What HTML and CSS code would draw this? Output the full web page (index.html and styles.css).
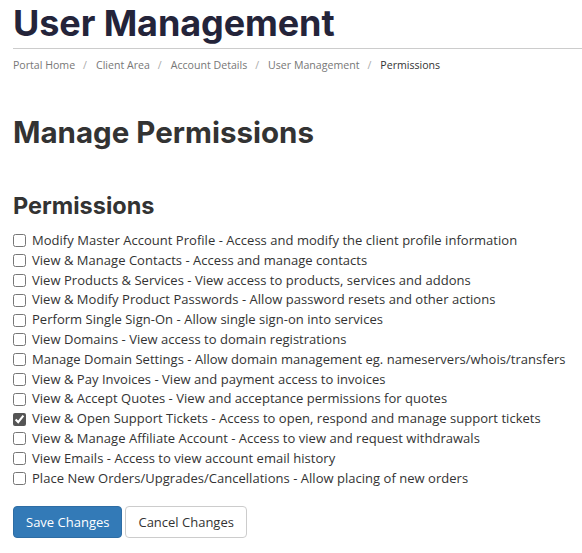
FILE: index.html
```html
<!DOCTYPE html>
<html>
<head>
<meta charset="utf-8">
<link rel="stylesheet" href="styles.css">
</head>
<body>
<div class="page">
  <h1 class="title">User Management</h1>
  <ol class="crumbs">
    <li><a href="#">Portal Home</a></li>
    <li><a href="#">Client Area</a></li>
    <li><a href="#">Account Details</a></li>
    <li><a href="#">User Management</a></li>
    <li class="active">Permissions</li>
  </ol>
  <h2 class="sub">Manage Permissions</h2>
  <h3 class="sec">Permissions</h3>
  <div class="perms">
    <label class="perm"><input type="checkbox"> Modify Master Account Profile - Access and modify the client profile information</label>
    <label class="perm"><input type="checkbox"> View &amp; Manage Contacts - Access and manage contacts</label>
    <label class="perm"><input type="checkbox"> View Products &amp; Services - View access to products, services and addons</label>
    <label class="perm"><input type="checkbox"> View &amp; Modify Product Passwords - Allow password resets and other actions</label>
    <label class="perm"><input type="checkbox"> Perform Single Sign-On - Allow single sign-on into services</label>
    <label class="perm"><input type="checkbox"> View Domains - View access to domain registrations</label>
    <label class="perm"><input type="checkbox"> Manage Domain Settings - Allow domain management eg. nameservers/whois/transfers</label>
    <label class="perm"><input type="checkbox"> View &amp; Pay Invoices - View and payment access to invoices</label>
    <label class="perm"><input type="checkbox"> View &amp; Accept Quotes - View and acceptance permissions for quotes</label>
    <label class="perm"><input type="checkbox" checked> View &amp; Open Support Tickets - Access to open, respond and manage support tickets</label>
    <label class="perm"><input type="checkbox"> View &amp; Manage Affiliate Account - Access to view and request withdrawals</label>
    <label class="perm"><input type="checkbox"> View Emails - Access to view account email history</label>
    <label class="perm"><input type="checkbox"> Place New Orders/Upgrades/Cancellations - Allow placing of new orders</label>
  </div>
  <div class="actions">
    <button class="btn btn-primary">Save Changes</button>
    <button class="btn btn-default">Cancel Changes</button>
  </div>
</div>
</body>
</html>
```
FILE: styles.css
```css
html, body {
  margin: 0;
  padding: 0;
  background: #fff;
}
body {
  font-family: "Open Sans", "Liberation Sans", sans-serif;
  font-size: 13px;
  color: #333;
  overflow: hidden;
}
.page {
  padding: 0 0 0 13px;
}
.title {
  font-family: Inter, "DejaVu Sans", sans-serif;
  font-weight: 700;
  font-size: 36px;
  line-height: 44px;
  color: #24243a;
  margin: 1px 0 0 0;
  padding-bottom: 3px;
  border-bottom: 1px solid #ccc;
  letter-spacing: -0.1px;
}
.crumbs {
  list-style: none;
  margin: 0;
  padding: 9px 0 0 0;
  display: flex;
  font-size: 10.6px;
  line-height: 15px;
}
.crumbs li {
  color: #333;
}
.crumbs li a {
  color: #777;
  text-decoration: none;
}
.crumbs li + li::before {
  content: "/";
  color: #aaa;
  padding: 0 9px 0 8px;
}
.sub {
  font-family: Inter, "DejaVu Sans", sans-serif;
  font-weight: 700;
  font-size: 29.5px;
  line-height: 36px;
  color: #333;
  margin: 41px 0 0 0;
}
.sec {
  font-family: Inter, "DejaVu Sans", sans-serif;
  font-weight: 700;
  font-size: 23.5px;
  line-height: 30px;
  color: #333;
  margin: 41px 0 0 0;
}
.perms {
  margin-top: 10px;
  display: flex;
  flex-direction: column;
}
.perm {
  display: flex;
  align-items: center;
  line-height: 19.8px;
  height: 19.8px;
  white-space: nowrap;
  color: #333;
  letter-spacing: 0.03px;
}
.perm input {
  margin: 0 6px 0 0;
  width: 13px;
  height: 13px;
  accent-color: #555;
}
.actions {
  margin-top: 18px;
  display: flex;
  gap: 3px;
}
.btn {
  font-family: "Open Sans", "Liberation Sans", sans-serif;
  font-size: 13px;
  line-height: 18px;
  padding: 6px 12px;
  border-radius: 4px;
  border: 1px solid #ccc;
  cursor: pointer;
}
.btn-primary {
  background: #337ab7;
  border-color: #2e6da4;
  color: #fff;
}
.btn-default {
  background: #fff;
  color: #333;
}
```
